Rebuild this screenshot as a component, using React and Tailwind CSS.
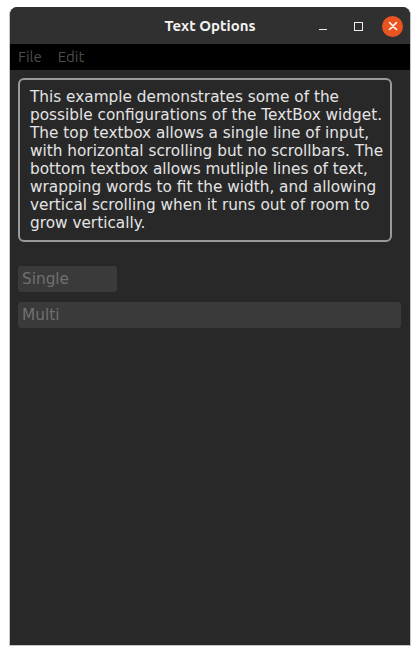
const description =
  "This example demonstrates some of the possible configurations of the TextBox widget. The top textbox allows a single line of input, with horizontal scrolling but no scrollbars. The bottom textbox allows mutliple lines of text, wrapping words to fit the width, and allowing vertical scrolling when it runs out of room to grow vertically.";

const TitleBar = () => {
  return (
    <div className="relative flex items-center justify-center h-[37px] pt-[2px] bg-[#303030] rounded-t-[8px]">
      <span className="text-[15px] font-bold text-[#f2f2f2] font-['Ubuntu','Noto_Sans',sans-serif]">
        Text Options
      </span>
      <div className="absolute right-[7px] top-0 h-full pt-[1px] flex items-center gap-[13px]">
        <div className="w-[22px] h-[22px] flex items-center justify-center">
          <div className="w-[8px] h-[1.5px] bg-[#eeeeee] mt-[7px]" />
        </div>
        <div className="w-[22px] h-[22px] flex items-center justify-center">
          <div className="w-[9px] h-[9px] border-[1.5px] border-[#eeeeee]" />
        </div>
        <div className="w-[21px] h-[21px] rounded-full bg-[#e95420] flex items-center justify-center">
          <svg width="10" height="10" viewBox="0 0 10 10">
            <path d="M1.5 1.5 L8.5 8.5 M8.5 1.5 L1.5 8.5" stroke="#ffffff" strokeWidth="1.6" strokeLinecap="round" />
          </svg>
        </div>
      </div>
    </div>
  );
};

const MenuBar = () => {
  return (
    <div className="flex items-center h-[26px] bg-black px-[8px] gap-[16px] text-[15px] text-[#4d4d4d] font-['Ubuntu','Noto_Sans',sans-serif]">
      <span>File</span>
      <span>Edit</span>
    </div>
  );
};

export default function App() {
  return (
    <div className="w-[420px] h-[655px] bg-white pt-[7px] pl-[9px]">
      <div className="w-[402px] h-[639px] flex flex-col border border-[#c4c4c4] border-t-0 rounded-t-[8px] bg-[#282828]">
        <TitleBar />
        <MenuBar />
        <div className="flex flex-col px-[8px] pt-[8px] font-['DejaVu_Sans',sans-serif]">
          <div className="w-[374px] border-2 border-[#9a9a9a] rounded-[6px] pl-[10px] pr-[4px] py-[8px] text-[15.3px] leading-[18px] text-[#e4e4e4]">
            {description}
          </div>
          <div className="mt-[24px] w-[99px] h-[26px] rounded-[3px] bg-[#3a3a3a] px-[4px] flex items-center text-[15.3px] text-[#707070]">
            Single
          </div>
          <div className="mt-[10px] w-[383px] h-[26px] rounded-[3px] bg-[#3a3a3a] px-[4px] flex items-center text-[15.3px] text-[#707070]">
            Multi
          </div>
        </div>
      </div>
    </div>
  );
}
